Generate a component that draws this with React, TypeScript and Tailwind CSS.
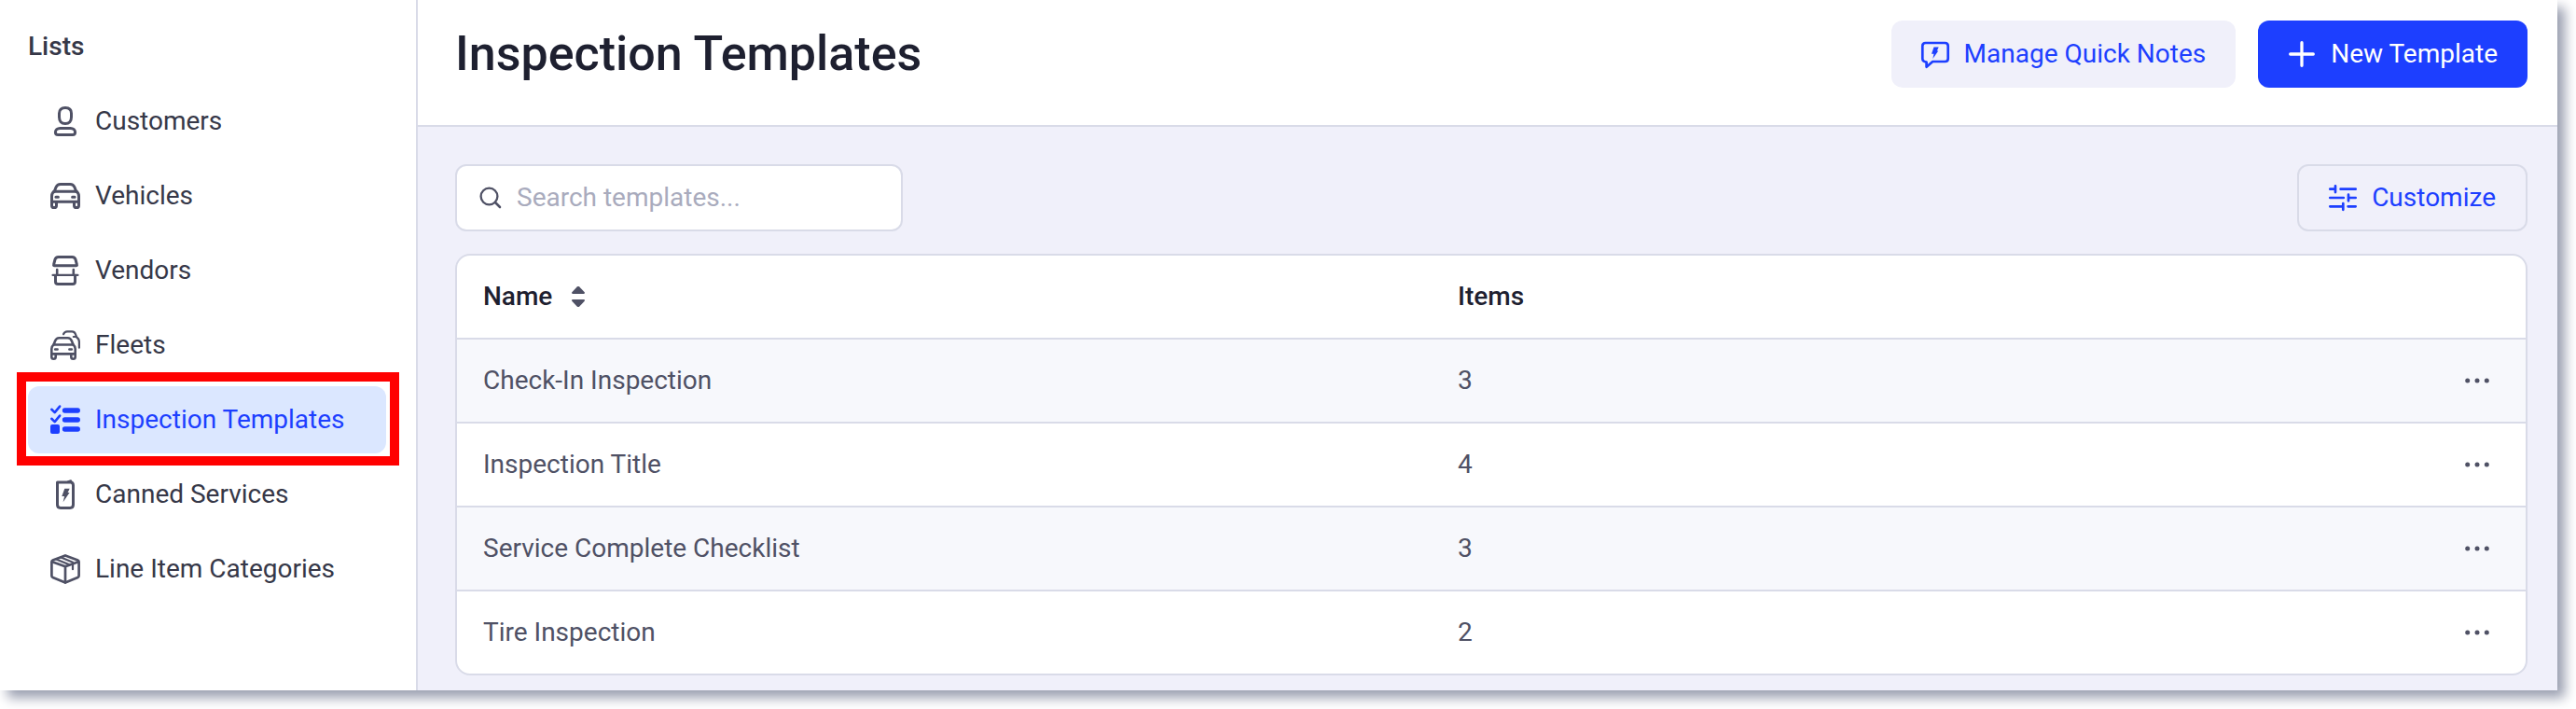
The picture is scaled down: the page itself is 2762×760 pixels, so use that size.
import type { ReactNode } from "react";

function Icon({ children, size = 32 }: { children: ReactNode; size?: number }) {
  return (
    <svg
      width={size}
      height={size}
      viewBox={`0 0 ${size} ${size}`}
      fill="none"
      stroke="currentColor"
      strokeWidth={3}
      strokeLinecap="round"
      strokeLinejoin="round"
      className="shrink-0 overflow-visible"
    >
      {children}
    </svg>
  );
}

const CustomerIcon = () => (
  <Icon>
    <path d="M16 1.5c4.2 0 6.5 2.2 6.5 6v4.1c0 4.2-2.3 7-6.5 7s-6.5-2.800-6.500-7V7.500c0-3.800 2.300-6 6.500-6Z" />
    <path d="M10.500 23.500h11c3 0 5.100 1.800 5.100 4.300 0 1.700-1 2.700-2.700 2.700H8.100c-1.700 0-2.700-1-2.700-2.700 0-2.500 2.100-4.300 5.100-4.300Z" />
  </Icon>
);

const CarIcon = () => (
  <Icon>
    <path d="M4.300 11.300 6 6.800C7 4.300 8.600 3.400 10.900 3.400h10.200c2.300 0 3.900.9 4.900 3.400l1.700 4.500" />
    <path d="M3.800 11.300h24.400" />
    <path d="M4 11.300C2.200 12.600 1.500 14 1.500 16.200v10c0 1.600.9 2.400 2.500 2.400s2.500-.8 2.500-2.400v-3.600M28 11.300c1.800 1.300 2.500 2.700 2.500 4.900v10c0 1.600-.9 2.400-2.500 2.400s-2.500-.8-2.500-2.400v-3.600M1.500 22.300h29" />
    <path d="M5.900 17.200h2.500M23.600 17.200h2.500" />
  </Icon>
);

const VendorIcon = () => (
  <Icon>
    <path d="M8.700 1.500h14.600c2.100 0 3.200.8 3.700 2.700l1.400 5.500c.2.700-.1 1-.8 1H4.400c-.7 0-1-.3-.8-1L5 4.200c.5-1.900 1.600-2.700 3.700-2.700Z" />
    <path d="M7.200 15v5.500M24.800 15v5.500" strokeWidth={2.600} />
    <path d="M2.600 20.900h26.800" strokeWidth={2.300} />
    <path d="M5.500 21.500v6.400c0 1.600 1 2.600 2.600 2.600h15.800c1.600 0 2.600-1 2.600-2.600v-6.400" />
  </Icon>
);

const FleetIcon = () => (
  <Icon>
    <g strokeWidth={2.600}>
      <path d="M3.500 15.500 5.200 11.300C6.100 9.200 7.300 8.300 9.300 8.300h9.400c2 0 3.200.9 4.100 3l1.700 4.200M3.500 15.500h21" />
      <path d="M3.500 15.500C2 16.700 1.300 18 1.300 20v8.500c0 1.400.8 2.200 2.200 2.200s2.200-.8 2.200-2.200v-3M24.500 15.500c1.500 1.200 2.200 2.500 2.200 4.500v8.500c0 1.400-.8 2.200-2.200 2.200s-2.200-.8-2.200-2.200v-3M1.400 25.400h25.200" />
      <path d="M5.200 20.500h2.400M20.400 20.500h2.400" />
    </g>
    <path d="M14 4.200c.9-2 2-2.900 4-2.900h5.200c1.900 0 2.900.8 3.600 2.600L28.200 7.500c1.800 1.200 2.700 2.700 2.700 5v6.200M24.800 7h3" strokeWidth={2.200} />
  </Icon>
);

const ChecklistIcon = () => (
  <Icon>
    <path d="M15.500 6h13.800M15.500 16h13.800M15.500 26h13.800" strokeWidth={5.300} />
    <path d="m1.300 4.800 3.400 3.300 5.400-6.500M1.300 14.800l3.400 3.300 5.400-6.500" strokeWidth={2.600} />
    <rect x="0" y="21" width="10" height="10" rx="2" fill="currentColor" stroke="none" />
  </Icon>
);

const CannedIcon = () => (
  <Icon>
    <path d="M7.500 3v24c0 2.200 1.100 3.400 3.400 3.400h10.200c2.300 0 3.400-1.200 3.400-3.400V6.200c0-2-.9-3.300-2.900-3.300Z" />
    <path d="M19 2.200 22 1.200l.6 1.800" strokeWidth={2} />
    <path d="M15.300 9.700h5.400L18.600 14h2L13.600 24.300l1.500-6.200h-2.800Z" fill="currentColor" stroke="none" />
  </Icon>
);

const BoxIcon = () => (
  <Icon>
    <g strokeWidth={2.700}>
      <path d="M16 1.400 29.400 6.600c.8.300 1.200.9 1.200 1.700v14.900c0 .8-.4 1.400-1.200 1.700L16 30.600 2.600 24.900c-.8-.3-1.200-.9-1.200-1.700V8.300c0-.8.400-1.400 1.200-1.700Z" />
      <path d="M2 8.200 16 13.300l14-5.100M16 13.300v17" />
      <path d="m6.800 5.800 13.600 5.500M11.400 3.500 24 8.800v7.400" strokeWidth={2.200} />
    </g>
  </Icon>
);

const QuickNoteIcon = () => (
  <Icon size={30}>
    <path d="M4.600 3h20.800c2.200 0 3.300 1.100 3.300 3.300v13.400c0 2.200-1.100 3.300-3.300 3.300H12.200l-6.600 5.700v-5.200c-3-.3-4.300-1.400-4.300-3.800V6.300C1.300 4.100 2.400 3 4.600 3Z" strokeWidth={2.700} />
    <path d="M13.500 7.400h5.200L16.800 11.500h1.500L12.300 20l1.200-5.200H11Z" fill="currentColor" stroke="none" />
  </Icon>
);

const PlusIcon = () => (
  <Icon size={30}>
    <path d="M15 2.700v24.600M2.700 15h24.600" strokeWidth={3.300} />
  </Icon>
);

const SlidersIcon = () => (
  <Icon size={30}>
    <path
      d="M1.300 5.700H7M7 2.300v6.800M12.600 5.700h16.100M1.300 15h14.500M21 11.700v6.600M21 15h7.700M1.300 24.300h14M15.300 21v6.800M20.600 24.300h8.100"
      strokeWidth={2.700}
    />
  </Icon>
);

const SearchIcon = () => (
  <Icon size={24}>
    <circle cx="10.500" cy="10.500" r="8.900" strokeWidth={2.300} />
    <path d="m17 17 5 5" strokeWidth={2.600} />
  </Icon>
);

const SortIcon = () => (
  <svg width="14" height="22" viewBox="0 0 14 22" fill="currentColor" className="shrink-0 text-[#4f5165]">
    <path d="M5.700.5a1.900 1.900 0 0 1 2.600 0l5.200 5.600c.9 1 .4 1.900-.8 1.900H1.300C.1 8-.4 7.100.5 6.100Z" />
    <path d="M5.700 21.500a1.900 1.900 0 0 0 2.600 0l5.200-5.600c.9-1 .4-1.900-.8-1.900H1.300c-1.200 0-1.700.9-.8 1.900Z" />
  </svg>
);

const DotsIcon = () => (
  <svg width="26" height="6" viewBox="0 0 26 6" fill="currentColor">
    <circle cx="2.700" cy="3" r="2.500" />
    <circle cx="13" cy="3" r="2.500" />
    <circle cx="23.300" cy="3" r="2.500" />
  </svg>
);

const navItems = [
  { label: "Customers", icon: <CustomerIcon /> },
  { label: "Vehicles", icon: <CarIcon /> },
  { label: "Vendors", icon: <VendorIcon /> },
  { label: "Fleets", icon: <FleetIcon /> },
  { label: "Inspection Templates", icon: <ChecklistIcon />, active: true },
  { label: "Canned Services", icon: <CannedIcon /> },
  { label: "Line Item Categories", icon: <BoxIcon /> },
];

const templates = [
  { name: "Check-In Inspection", items: 3 },
  { name: "Inspection Title", items: 4 },
  { name: "Service Complete Checklist", items: 3 },
  { name: "Tire Inspection", items: 2 },
];

function Sidebar() {
  return (
    <aside className="flex w-[448px] shrink-0 flex-col border-r-2 border-[#d9dbe8] bg-white pr-8 pl-[30px]">
      <h2 className="mt-[30px] h-10 text-[28px] leading-10 font-medium text-[#363848]">Lists</h2>
      <nav className="mt-6 flex flex-col gap-2">
        {navItems.map((item) => (
          <a
            key={item.label}
            className={
              item.active
                ? "relative flex h-[72px] items-center gap-4 rounded-xl bg-[#dbe7ff] px-6 text-[#1d3fff]"
                : "flex h-[72px] items-center gap-4 rounded-xl px-6 text-[#4f5165]"
            }
          >
            {item.icon}
            <span className={item.active ? "whitespace-nowrap" : "whitespace-nowrap text-[#363848]"}>
              {item.label}
            </span>
            {item.active && (
              <span className="absolute -top-[15px] -right-[14px] -bottom-[13px] -left-3 border-[10px] border-[#ff0000]" />
            )}
          </a>
        ))}
      </nav>
    </aside>
  );
}

export default function App() {
  return (
    <div className="h-[760px] w-[2762px] overflow-hidden bg-white font-[Roboto,sans-serif] text-[28px] leading-10">
      <div className="flex h-[740px] w-[2742px] shadow-[8px_8px_12px_#9a9fb0]">
        <Sidebar />
        <main className="flex min-w-0 flex-1 flex-col bg-[#f0f0fa]">
          <header className="flex h-[136px] shrink-0 items-start justify-between border-b-2 border-[#d9dbe8] bg-white pt-[22px] pr-8 pl-10">
            <h1 className="text-[52px] leading-[72px] font-medium text-[#1e2030]">Inspection Templates</h1>
            <div className="flex gap-6">
              <button className="flex h-[72px] items-center gap-4 rounded-xl bg-[#f0f0fa] px-8 text-[#1d3fff]">
                <QuickNoteIcon />
                <span>Manage Quick Notes</span>
              </button>
              <button className="flex h-[72px] items-center gap-4 rounded-xl bg-[#1d3fff] px-8 text-white">
                <PlusIcon />
                <span>New Template</span>
              </button>
            </div>
          </header>
          <section className="flex flex-col gap-6 pt-10 pr-8 pl-10">
            <div className="flex justify-between">
              <label className="flex h-[72px] w-[480px] items-center gap-4 rounded-xl border-2 border-[#d9dbe8] bg-white px-6 text-[#4f5165]">
                <SearchIcon />
                <input
                  className="min-w-0 flex-1 bg-transparent outline-none placeholder:text-[#a9abbd] placeholder:opacity-100"
                  placeholder="Search templates..."
                />
              </label>
              <button className="flex h-[72px] items-center gap-4 rounded-xl border-2 border-[#d9dbe8] px-8 text-[#1d3fff]">
                <SlidersIcon />
                <span>Customize</span>
              </button>
            </div>
            <div className="overflow-hidden rounded-2xl border-2 border-[#d9dbe8] bg-white">
              <div className="grid h-[88px] grid-cols-[1045px_1fr] items-center px-7 font-medium text-[#1e2030]">
                <div className="flex items-center gap-[21px]">
                  <span>Name</span>
                  <SortIcon />
                </div>
                <span>Items</span>
              </div>
              {templates.map((t) => (
                <div
                  key={t.name}
                  className="grid h-[90px] grid-cols-[1045px_1fr_auto] items-center border-t-2 border-[#d9dbe8] pr-[39px] pl-7 text-[#4f5165] even:bg-[#f7f8fc]"
                >
                  <span>{t.name}</span>
                  <span>{t.items}</span>
                  <DotsIcon />
                </div>
              ))}
            </div>
          </section>
        </main>
      </div>
    </div>
  );
}
